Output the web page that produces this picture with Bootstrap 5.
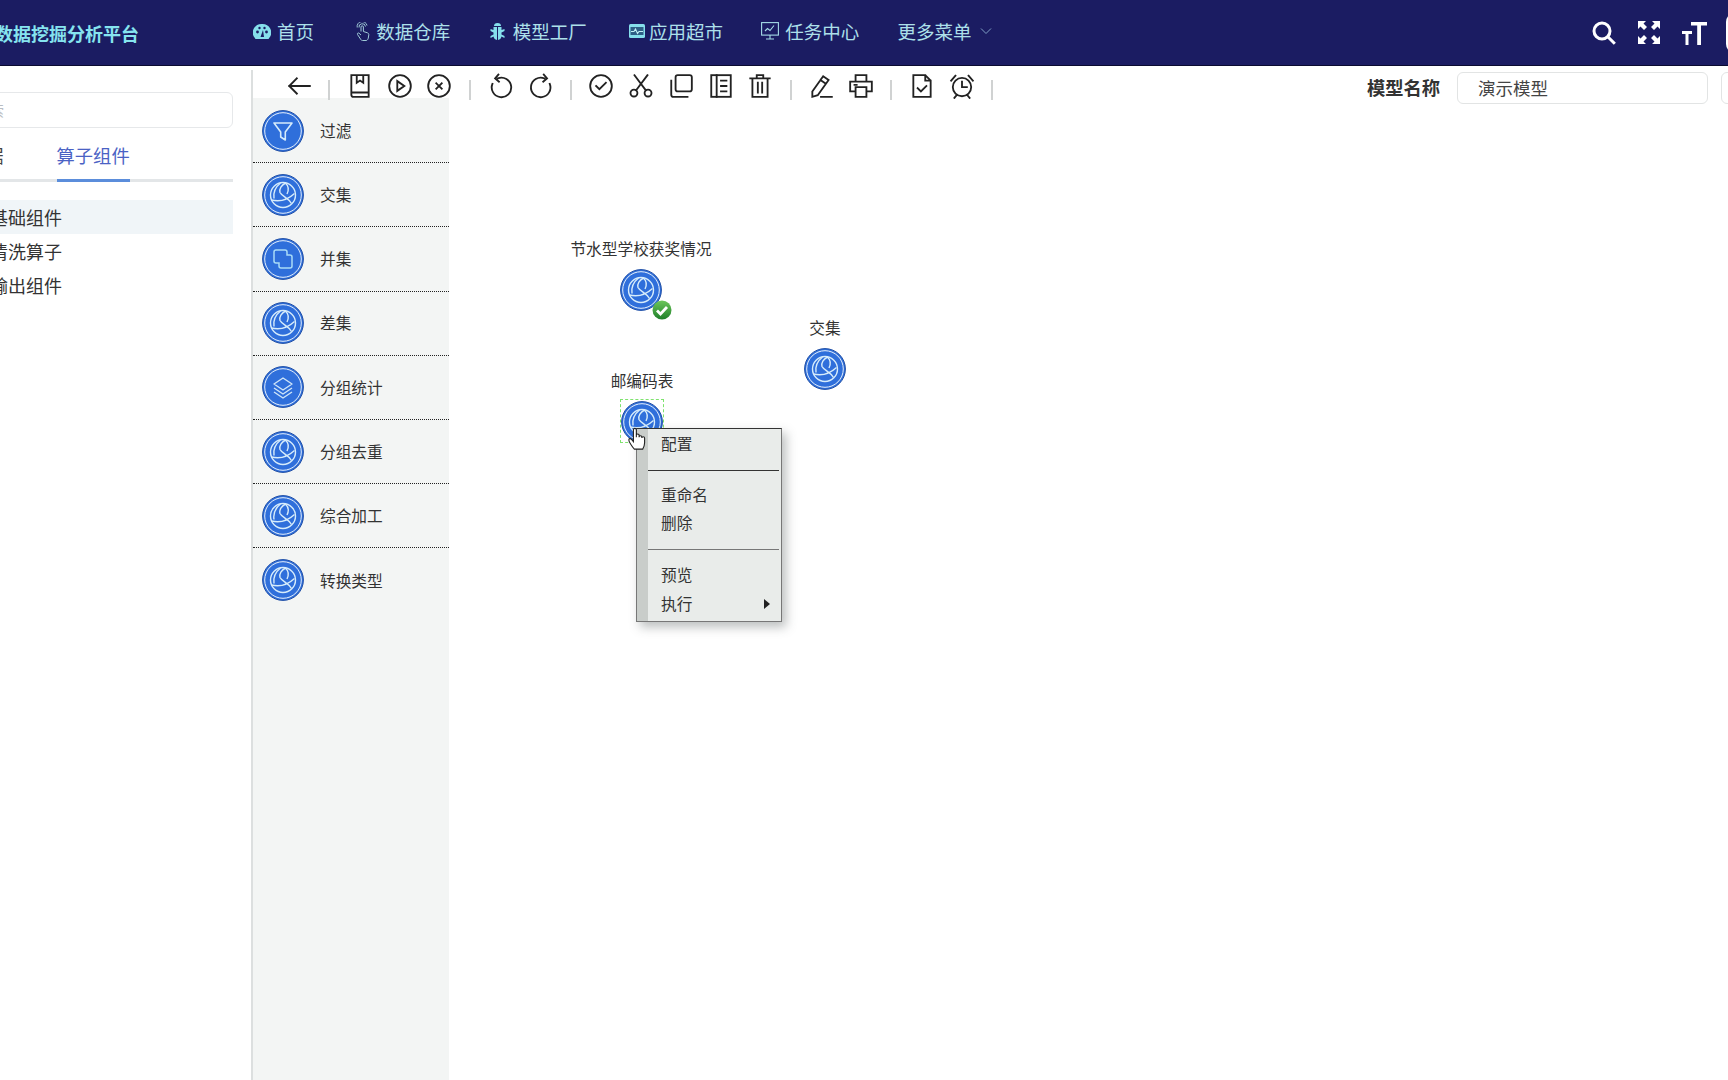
<!DOCTYPE html>
<html lang="zh">
<head>
<meta charset="utf-8">
<title>数据挖掘分析平台</title>
<link href="https://cdn.jsdelivr.net/npm/bootstrap@5.3.0/dist/css/bootstrap.min.css" rel="stylesheet">
<style>
html,body{height:100%;overflow:hidden;margin:0;background:#fff;font-family:"Noto Sans CJK SC","Liberation Sans",sans-serif;color:#333}
.top-bar{height:66px;background:#1b1c62;padding:0;flex-wrap:nowrap;overflow:hidden;justify-content:flex-start;border-bottom:1px solid #0b0b30}
.brand-cell{width:253px;flex:none;margin:0;padding:0}
.brand-text{margin-left:-5px;font-size:18px;font-weight:700;color:#86e4ef;line-height:1}
.top-nav{flex-direction:row;gap:38.300px;flex-wrap:nowrap;margin-bottom:2px}
.top-link{padding:0;font-size:18.500px;line-height:1;color:#ade0ea;display:flex;align-items:center;white-space:nowrap}
.top-link svg{flex:none}
.ic-cell{width:24px;display:flex;align-items:center;justify-content:flex-start;flex:none}
.top-right{margin-left:auto;display:flex;align-items:center;flex:none;gap:20px}
.pill-stub{width:30px;height:40px;background:#fff;border-radius:9px 0 0 9px;margin-right:-28px;margin-left:-1px}
.work{height:1014px}
.side-left{width:251px;flex:none;overflow:hidden;padding-top:26px}
.side-inner{margin-left:-60px;width:293px}
.search-box{height:36px;padding:0 0 0 35px;border:1px solid #e6e8ea;border-radius:6px;font-size:14px;box-shadow:none}
.search-box::placeholder{color:#b9bdc2}
.tab-row{height:54px;border-bottom:3px solid #e3e6e8;padding-left:27px;gap:53px;flex-wrap:nowrap}
.tab-item{font-size:18.300px;padding:0;height:54px;line-height:54px;color:#444;white-space:nowrap}
.tab-item.on{color:#4a62c4;border-bottom:3px solid #5b8ddb;width:73px}
.tree-list{margin-top:18px}
.tree-item{height:34px;line-height:34px;padding:0 0 0 50px;font-size:18px;border:0;background:transparent;color:#333}
.tree-item.on{background:#f0f5f8}
.main-col{flex:1;min-width:0;border-left:2px solid #dcdfdf;margin-top:4px;position:relative;overflow:hidden}
.tool-row{height:28px;padding-left:26px;position:relative;z-index:2;flex-wrap:nowrap}
.tool-cell{width:39.850px;display:flex;justify-content:center;flex:none;height:24px;margin-top:4px}
.tool-cell svg{width:26px;height:26px;fill:none;stroke:#222;stroke-width:1.700;stroke-linecap:square;margin-top:-1px}
.tool-gap{width:21px;flex:none;display:flex;justify-content:center;padding-top:10px}
.tool-gap i{display:block;width:2px;height:20px;background:#d0d2d2}
.name-box{margin-left:auto;display:flex;align-items:flex-start;flex:none;margin-right:-43px}
.name-label{font-size:18.300px;font-weight:700;color:#333;width:90px;line-height:34px;white-space:nowrap}
.name-input{width:251px;height:32px;padding:0 0 2px 20px;font-size:17.500px;color:#444;border:1px solid #e2e4e4;border-radius:6px;margin-top:2px;box-shadow:none}
.name-stub{width:50px;height:32px;margin:2px 0 0 13px;border:1px solid #e2e4e4;border-radius:6px;flex:none}
.body-row{height:982px}
.palette{width:196px;flex:none;background:#f3f5f4;padding-top:1px}
.pal-item{height:64.200px;flex:none;border-bottom:1px dotted #222;padding:0 0 0 9px;gap:16px;border-top:0;border-left:0;border-right:0;background:transparent;font-size:15.700px;color:#333}
.node-ic{width:42px;height:42px;display:block;flex:none}
.canvas{position:relative;flex:1;min-width:0;background:#fff}
.graph-node{position:absolute;width:42px;height:42px}
.graph-label{position:absolute;top:-32px;left:50%;transform:translateX(-50%);white-space:nowrap;font-size:15.700px;line-height:24px;color:#333}
.ok-dot{position:absolute;left:32px;top:31px;width:20px;height:20px}
.pick-box{position:absolute;left:-1px;top:-2px;width:44px;height:44px;border:1px dashed #7fe36e}
.ctx-menu{position:absolute;left:187px;top:330px;width:146px;height:194px;background:linear-gradient(90deg,#c9cdca 0 11px,#e9ecea 11px);border:1px solid #777;border-top-color:#333;box-shadow:4px 5px 10px rgba(60,70,70,.35);font-size:15.700px;color:#333;z-index:4;padding:1px 0 0;border-radius:0;min-width:0;display:block}
.ctx-item{height:28.500px;line-height:28.500px;padding:0 0 0 24px;position:relative;background:transparent;color:#333}
.ctx-sep{height:1px;background:#333;margin:11px 2px 10px 11px;opacity:1;border:0}
.ctx-sep.soft{background:#777;margin-bottom:11.500px}
.ctx-arrow{position:absolute;right:11px;top:9px;width:0;height:0;border-left:6px solid #222;border-top:5px solid transparent;border-bottom:5px solid transparent}
.hand{position:absolute;left:-10px;top:-2px;width:22px;height:24px;z-index:5}
</style>
</head>
<body>
<svg width="0" height="0" style="position:absolute">
<defs>
<linearGradient id="okfill" x1="0" y1="0" x2="0" y2="1"><stop offset="0" stop-color="#6cc65a"/><stop offset="1" stop-color="#1f7f2a"/></linearGradient>
<symbol id="disc" viewBox="0 0 42 42"><circle cx="21" cy="21" r="20.400" fill="#2f6fdb" stroke="#1f4ea5" stroke-width="1"/><circle cx="21" cy="21" r="18.300" fill="none" stroke="#e6f0fb" stroke-width="1"/></symbol>
<symbol id="globe" viewBox="0 0 42 42"><use href="#disc"/><g fill="none" stroke="#d6ecfb" stroke-width="1.400"><circle cx="21" cy="21" r="12.500"/><path d="M9.500 26c8 2 16 0 23-6.500M18.500 9c-5 4-7.500 9-6.500 15.500M23.500 9c-4 2-6.500 6-5.500 9.500 2 4 8 5 11.500 11M23.500 9c3 3 3.500 7 1.500 11"/></g></symbol>
<symbol id="funnel" viewBox="0 0 42 42"><use href="#disc"/><path d="M12 13h18l-6.700 9v8l-4.600-3v-5z" fill="none" stroke="#d6ecfb" stroke-width="1.600" stroke-linejoin="round"/></symbol>
<symbol id="merge" viewBox="0 0 42 42"><use href="#disc"/><path d="M12 14a2 2 0 0 1 2-2h9a2 2 0 0 1 2 2v3h3a2 2 0 0 1 2 2v9a2 2 0 0 1-2 2h-9a2 2 0 0 1-2-2v-3h-3a2 2 0 0 1-2-2z" fill="none" stroke="#a9dcf7" stroke-width="1.500"/></symbol>
<symbol id="stack" viewBox="0 0 42 42"><use href="#disc"/><g fill="none" stroke="#cfe5f8" stroke-width="1.400" stroke-linejoin="round"><path d="M21 12l9 6-9 6-9-6z"/><path d="M12 22l9 6 9-6M12 26l9 6 9-6"/></g></symbol>
</defs>
</svg>

<nav class="navbar top-bar">
  <div class="navbar-brand brand-cell"><div class="brand-text">数据挖掘分析平台</div></div>
  <ul class="nav top-nav">
    <li class="nav-item"><a class="nav-link top-link" href="#"><span class="ic-cell"><svg width="18" height="15" viewBox="0 0 18 15"><path d="M9 0a9 8.500 0 0 0-7.500 13.500L2.500 15h13l1-1.500A9 8.500 0 0 0 9 0z" fill="#86dfec"/><circle cx="4.500" cy="8" r="1.400" fill="#1b1c62"/><circle cx="13.500" cy="8" r="1.400" fill="#1b1c62"/><circle cx="6.500" cy="4" r="1.200" fill="#1b1c62"/><circle cx="11.500" cy="4" r="1.200" fill="#1b1c62"/><path d="M7.500 13l2.500-7 1 7z" fill="#1b1c62"/></svg></span>首页</a></li>
    <li class="nav-item"><a class="nav-link top-link" href="#"><span class="ic-cell"><svg class="ms-1" width="14" height="19" viewBox="0 0 14 19" fill="none" stroke="#9fc9d6" stroke-width="1"><path d="M5 9.500V5a1.200 1.200 0 0 1 2.400 0v4.500l4 1.300c1 .4 1.500 1 1.400 2L12.300 16c-.2 1-1 2.500-2 2.500H6.500c-1 0-1.500-.5-2-1.500L1.500 12.500c-.5-1 .5-2 1.500-1.300L5 13"/><path d="M3 5.500a3.200 3.200 0 0 1 6.500-1M1.200 5.500a5 5 0 0 1 9.800-2"/></svg></span>数据仓库</a></li>
    <li class="nav-item"><a class="nav-link top-link" href="#"><span class="ic-cell"><svg width="17" height="19" viewBox="0 0 17 19"><path d="M8.500 1a3.500 3 0 0 1 3.500 3H5a3.500 3 0 0 1 3.500-3zM4.500 5h3.500v13c-2-.3-3-1.500-3.500-3.500L1.500 16v-2l3-1.500v-2L1.500 9V7l3 1zM12.500 5H9v13c2-.3 3-1.500 3.500-3.500l3 1.500v-2l-3-1.500v-2l3-1.500V7l-3 1z" fill="#86dfec"/></svg></span>模型工厂</a></li>
    <li class="nav-item"><a class="nav-link top-link" href="#"><span class="ic-cell"><svg class="ms-1" width="16" height="14" viewBox="0 0 16 14"><rect x="0" y="0" width="16" height="14" rx="1.500" fill="#86dfec"/><rect x="1.500" y="3" width="13" height="8" fill="#2e5f86"/><path d="M2 7.500h3l1.500-2.500 2 4.500 1.500-2h4" fill="none" stroke="#bff0f5" stroke-width="1.100"/></svg></span>应用超市</a></li>
    <li class="nav-item"><a class="nav-link top-link" href="#"><span class="ic-cell"><svg width="18" height="18" viewBox="0 0 18 18" fill="none" stroke="#a5dce6" stroke-width="1.100"><rect x=".6" y=".6" width="16.800" height="12.500"/><path d="M4 9l2.500-2.500 2.500 2L13 3.500M5 17h8M9 13v4"/></svg></span>任务中心</a></li>
    <li class="nav-item"><a class="nav-link top-link" href="#">更多菜单<svg class="ms-2" width="12" height="8" viewBox="0 0 12 8" fill="none" stroke="#7f9fc4" stroke-width="1"><path d="M1 1.500l5 5 5-5"/></svg></a></li>
  </ul>
  <div class="top-right">
    <svg width="26" height="26" viewBox="0 0 26 26" fill="none" stroke="#fff" stroke-width="3"><circle cx="11" cy="11" r="8"/><path d="M16.800 16.800l7 7"/></svg>
    <svg width="24" height="25" viewBox="0 0 24 25" fill="#fff"><path d="M1 1h8L6.500 3.500 10 7 7 10 3.500 6.500 1 9zM23 1h-8l2.500 2.500L14 7l3 3 3.500-3.500L23 9zM1 24h8l-2.500-2.500L10 18l-3-3-3.500 3.500L1 16zM23 24h-8l2.500-2.500L14 18l3-3 3.500 3.500L23 16z"/></svg>
    <svg width="26" height="26" viewBox="0 0 26 26" fill="#fff"><path d="M10 2h16v3.500h-6V25h-3.800V5.500H10zM1 11h10v3H7.500v11H4.500V14H1z"/></svg>
    <div class="pill-stub"></div>
  </div>
</nav>

<div class="d-flex work">
  <aside class="side-left">
    <div class="side-inner">
      <input class="form-control search-box" placeholder="搜索">
      <ul class="nav tab-row">
        <li class="nav-item"><a class="nav-link tab-item" href="#">数据</a></li>
        <li class="nav-item"><a class="nav-link tab-item on" href="#">算子组件</a></li>
      </ul>
      <div class="list-group list-group-flush tree-list">
        <a class="list-group-item tree-item on" href="#">基础组件</a>
        <a class="list-group-item tree-item" href="#">清洗算子</a>
        <a class="list-group-item tree-item" href="#">输出组件</a>
      </div>
    </div>
  </aside>
  <main class="main-col">
    <div class="d-flex tool-row">
      <div class="tool-cell"><svg viewBox="0 0 24 24"><path d="M22 12H3M10 5l-7 7 7 7"/></svg></div>
      <div class="tool-gap"><i></i></div>
      <div class="tool-cell"><svg viewBox="0 0 24 24"><path d="M4 2h16v20H6a2 2 0 0 1-2-2zM4 18h16M9 2v7l3-2 3 2V2"/></svg></div>
      <div class="tool-cell"><svg viewBox="0 0 24 24"><circle cx="12" cy="12" r="10"/><path d="M9.500 7.500l6.500 4.500-6.500 4.500z"/></svg></div>
      <div class="tool-cell"><svg viewBox="0 0 24 24"><circle cx="12" cy="12" r="10"/><path d="M9.500 9.500l5 5M14.500 9.500l-5 5"/></svg></div>
      <div class="tool-gap"><i></i></div>
      <div class="tool-cell"><svg viewBox="0 0 24 24"><path d="M10 5a9 9 0 1 1-5 5M10.500 1.500L7.500 5l3.500 3"/></svg></div>
      <div class="tool-cell"><svg viewBox="0 0 24 24"><path d="M16 5a9 9 0 1 0 5 5M15.500 1.500L18.500 5 15 8"/></svg></div>
      <div class="tool-gap"><i></i></div>
      <div class="tool-cell"><svg viewBox="0 0 24 24"><circle cx="12" cy="12" r="10"/><path d="M7.500 12l3 3 6-6"/></svg></div>
      <div class="tool-cell"><svg viewBox="0 0 24 24"><circle cx="5.500" cy="18.500" r="3.200"/><circle cx="18.500" cy="18.500" r="3.200"/><path d="M7.500 16L18 2M16.500 16L6 2"/></svg></div>
      <div class="tool-cell"><svg viewBox="0 0 24 24"><rect x="7" y="2" width="15" height="15" rx="2"/><path d="M3 7v13a2 2 0 0 0 2 2h13"/></svg></div>
      <div class="tool-cell"><svg viewBox="0 0 24 24"><rect x="3" y="2" width="18" height="20"/><path d="M8 2v20M12 7h5M12 12h5M12 17h5"/></svg></div>
      <div class="tool-cell"><svg viewBox="0 0 24 24"><path d="M3 5h18M9 5V2h6v3M5 5v17h14V5M10 9v9M14 9v9"/></svg></div>
      <div class="tool-gap"><i></i></div>
      <div class="tool-cell"><svg viewBox="0 0 24 24"><path d="M4 17L14 3l5 3.500L9 20.500l-5 1.500zM11.500 6.500l5 3.500M12 22h10"/></svg></div>
      <div class="tool-cell"><svg viewBox="0 0 24 24"><path d="M7 8V2h10v6M7 17H2V8h20v9h-5M7 13h10v9H7zM6 11h2"/></svg></div>
      <div class="tool-gap"><i></i></div>
      <div class="tool-cell"><svg viewBox="0 0 24 24"><path d="M4 2h11l5 5v15H4zM15 2v5h5M8 14l3 3 5-5"/></svg></div>
      <div class="tool-cell"><svg viewBox="0 0 24 24"><circle cx="12" cy="13" r="8.500"/><path d="M12 8v5h4.500M2 7l4-4.500M22 7l-4-4.500M7 20.500L5 23M17 20.500L19 23"/></svg></div>
      <div class="tool-gap"><i></i></div>
      <div class="name-box">
        <div class="name-label">模型名称</div>
        <input class="form-control name-input" value="演示模型">
        <div class="name-stub"></div>
      </div>
    </div>
    <div class="d-flex body-row">
      <div class="list-group list-group-flush rounded-0 palette">
        <div class="list-group-item d-flex align-items-center pal-item"><svg class="node-ic"><use href="#funnel"/></svg>过滤</div>
        <div class="list-group-item d-flex align-items-center pal-item"><svg class="node-ic"><use href="#globe"/></svg>交集</div>
        <div class="list-group-item d-flex align-items-center pal-item"><svg class="node-ic"><use href="#merge"/></svg>并集</div>
        <div class="list-group-item d-flex align-items-center pal-item"><svg class="node-ic"><use href="#globe"/></svg>差集</div>
        <div class="list-group-item d-flex align-items-center pal-item"><svg class="node-ic"><use href="#stack"/></svg>分组统计</div>
        <div class="list-group-item d-flex align-items-center pal-item"><svg class="node-ic"><use href="#globe"/></svg>分组去重</div>
        <div class="list-group-item d-flex align-items-center pal-item"><svg class="node-ic"><use href="#globe"/></svg>综合加工</div>
        <div class="list-group-item d-flex align-items-center pal-item"><svg class="node-ic"><use href="#globe"/></svg>转换类型</div>
      </div>
      <div class="canvas">
        <div class="graph-node" style="left:171px;top:171px">
          <div class="graph-label">节水型学校获奖情况</div>
          <svg class="node-ic"><use href="#globe"/></svg>
          <svg class="ok-dot" viewBox="0 0 20 20"><circle cx="10" cy="10" r="9.500" fill="url(#okfill)"/><path d="M5 10.500l3.500 3.500 6.500-7" fill="none" stroke="#fff" stroke-width="2.800"/></svg>
        </div>
        <div class="graph-node" style="left:355px;top:250px">
          <div class="graph-label">交集</div>
          <svg class="node-ic"><use href="#globe"/></svg>
        </div>
        <div class="graph-node" style="left:172px;top:303px">
          <div class="graph-label">邮编码表</div>
          <div class="pick-box"></div>
          <svg class="node-ic"><use href="#globe"/></svg>
        </div>
        <div class="dropdown-menu ctx-menu">
          <svg class="hand" viewBox="0 0 24 26"><path d="M8 24c-2-2-6-8-6-10 0-1.500 2-2 3-.5L7 16V3a1.600 1.600 0 0 1 3.200 0v8-2a1.500 1.500 0 0 1 3 0v2a1.500 1.500 0 0 1 3 0v1a1.500 1.500 0 0 1 3 0v5c0 3-1 5-2 7z" fill="#fff" stroke="#222" stroke-width="1.200"/></svg>
          <div class="ctx-item">配置</div>
          <hr class="ctx-sep">
          <div class="ctx-item">重命名</div>
          <div class="ctx-item">删除</div>
          <hr class="ctx-sep soft">
          <div class="ctx-item">预览</div>
          <div class="ctx-item">执行<span class="ctx-arrow"></span></div>
        </div>
      </div>
    </div>
  </main>
</div>
<script src="https://cdn.jsdelivr.net/npm/bootstrap@5.3.0/dist/js/bootstrap.bundle.min.js"></script>
</body>
</html>
